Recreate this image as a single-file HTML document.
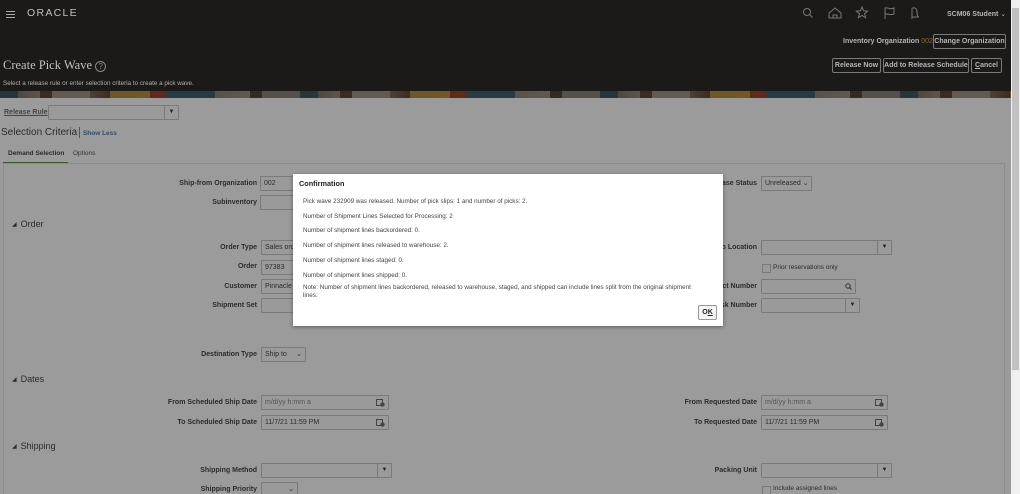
<!DOCTYPE html>
<html><head><meta charset="utf-8"><style>
*{margin:0;padding:0;box-sizing:border-box}
html,body{width:1020px;height:494px;overflow:hidden}
body{background:#9b9b9b;font-family:"Liberation Sans",Arial,sans-serif;position:relative;color:#2b2b2b}
.a{position:absolute;white-space:nowrap}
#hdr{left:0;top:0;width:1011px;height:91px;background:#1b1a19}
#ban{left:0;top:91px;width:1011px;height:7px;background:repeating-linear-gradient(90deg,#26363d 0,#26363d 18px,#4d4740 18px,#5d564c 40px,#3e2a20 40px,#3e2a20 52px,#625b52 52px,#625b52 90px,#4d4134 90px,#3e2a20 110px,#6e5628 110px,#715724 150px,#5e2a1a 150px,#5e2a1a 165px,#273b44 165px,#273b44 215px,#58524a 215px,#5f5950 250px,#352a20 250px,#352a20 262px,#55504a 262px,#55504a 300px)}
#sb{left:1011px;top:0;width:9px;height:494px;background:#f0f0f0}
#sbt{left:1012px;top:8px;width:7px;height:362px;background:#c1c1c1}
.w{color:#b5b5b5;font-size:7px;font-weight:bold}
.btn{position:absolute;border:1px solid #7a7a7a;border-radius:2px;color:#b5b5b5;font-size:7px;font-weight:bold;text-align:center;line-height:13px}
.lb{position:absolute;font-size:7px;font-weight:bold;color:#2b2b2b;text-align:right;white-space:nowrap}
.in{position:absolute;border:1px solid #7a7a7a;background:#9a9a9a;height:15px;font-size:7px;color:#2b2b2b;line-height:13px;padding-left:3px;border-radius:1px}
.dd{position:absolute;right:0;top:0;width:14px;height:13px;border-left:1px solid #7a7a7a;font-size:6px;text-align:center;line-height:13px;color:#222}
.sec{position:absolute;font-size:9px;color:#2b2b2b;left:12px}
.sec:before{content:"\25E2";font-size:6px;margin-right:4px;position:relative;top:-1px}
.cb{position:absolute;width:9px;height:9px;border:1px solid #7a7a7a}
#dlg{left:293px;top:174px;width:430px;height:152px;background:#fff;box-shadow:0 1px 4px rgba(0,0,0,.4)}
#dlg p{position:absolute;left:10px;font-size:6.3px;color:#444}
</style></head><body>
<div id="hdr" class="a"></div>
<div id="ban" class="a"></div>
<div id="sb" class="a"></div><div id="sbt" class="a"></div>
<svg class="a" style="left:6px;top:10px" width="9" height="8" stroke="#aaa" stroke-width="1"><path d="M0 1.5h9M0 4.5h9M0 7.5h9"/></svg>
<div class="a" style="left:27px;top:7px;color:#c0c0c0;font-size:10.5px;letter-spacing:1.3px">ORACLE</div>
<svg class="a" style="left:800px;top:6px" width="120" height="14" fill="none" stroke="#777" stroke-width="1">
<circle cx="7" cy="6" r="3.5"/><path d="M9.5 8.5l3 3"/>
<path d="M29 7l6-5 6 5v5h-12z M33 12v-3h4v3"/>
<path d="M62 1l1.6 3.8 4 .3-3 2.6 1 4-3.6-2.2-3.6 2.2 1-4-3-2.6 4-.3z"/>
<path d="M85 13V2c3-1 5 2 9 0v6c-4 2-6-1-9 0"/>
<path d="M112 13V3c0-2 5-2 5 3s2 5 2 5h-7"/>
</svg>
<div class="a w" style="left:947px;top:10px">SCM06 Student <span style="font-weight:normal">⌄</span></div>
<div class="a w" style="left:843px;top:38px">Inventory Organization <span style="color:#8a6a35;font-weight:normal">002</span></div>
<div class="btn" style="left:933px;top:34px;width:73px;height:15px">Change Organization</div>
<div class="btn" style="left:832px;top:58px;width:49px;height:15px">Release Now</div>
<div class="btn" style="left:883px;top:58px;width:86px;height:15px">Add to Release Schedule</div>
<div class="btn" style="left:971px;top:58px;width:31px;height:15px"><u>C</u>ancel</div>
<div class="a" style="left:3px;top:58px;color:#c0c0c0;font-size:12.5px;font-family:'Liberation Serif',serif">Create Pick Wave <span style="font-family:'Liberation Sans';color:#888;border:1px solid #888;border-radius:50%;display:inline-block;width:11px;height:11px;line-height:10px;text-align:center;font-size:8px">?</span></div>
<div class="a" style="left:3px;top:80px;color:#b0b0b0;font-size:6.3px">Select a release rule or enter selection criteria to create a pick wave.</div>
<div class="lb" style="left:4px;top:109px;text-decoration:underline;color:#444">Release Rule</div>
<div class="in" style="left:48px;top:105px;width:131px"><div class="dd">▼</div></div>
<div class="a" style="left:1px;top:127px;font-size:10px;color:#2b2b2b">Selection Criteria<span style="border-left:1px solid #555;margin-left:2px"></span> <span style="font-size:6.5px;color:#2b4f6e;font-weight:bold">Show Less</span></div>
<div class="a" style="left:8px;top:150px;font-size:6.5px;font-weight:bold">Demand Selection</div>
<div class="a" style="left:73px;top:150px;font-size:6.5px;color:#333">Options</div>
<div class="a" style="left:3px;top:162px;width:65px;height:2px;background:#3b5a2a"></div>
<div class="a" style="left:3px;top:163px;width:1002px;height:340px;border:1px solid #8c8c8c;border-bottom:none"></div>

<div class="lb" style="right:763px;top:180px">Ship-from Organization</div><div class="in" style="left:260px;top:176px;width:40px">002</div>
<div class="lb" style="right:763px;top:199px">Subinventory</div><div class="in" style="left:260px;top:195px;width:40px"></div>
<div class="sec" style="top:219px">Order</div>
<div class="lb" style="right:763px;top:244px">Order Type</div><div class="in" style="left:261px;top:240px;width:40px">Sales orde</div>
<div class="lb" style="right:763px;top:263px">Order</div><div class="in" style="left:261px;top:260px;width:40px">97383</div>
<div class="lb" style="right:763px;top:283px">Customer</div><div class="in" style="left:261px;top:279px;width:40px">Pinnacle</div>
<div class="lb" style="right:763px;top:302px">Shipment Set</div><div class="in" style="left:261px;top:298px;width:40px"></div>
<div class="lb" style="right:763px;top:351px">Destination Type</div><div class="in" style="left:261px;top:347px;width:45px">Ship to <span style="position:absolute;right:3px">⌄</span></div>
<div class="sec" style="top:374px">Dates</div>
<div class="lb" style="right:763px;top:399px">From Scheduled Ship Date</div><div class="in" style="left:261px;top:395px;width:128px;color:#555">m/d/yy h:mm a</div>
<div class="lb" style="right:763px;top:419px">To Scheduled Ship Date</div><div class="in" style="left:261px;top:415px;width:128px">11/7/21 11:59 PM</div>
<div class="sec" style="top:441px">Shipping</div>
<div class="lb" style="right:763px;top:467px">Shipping Method</div><div class="in" style="left:261px;top:463px;width:131px"><div class="dd">▼</div></div>
<div class="lb" style="right:763px;top:486px">Shipping Priority</div><div class="in" style="left:261px;top:482px;width:37px"><span style="position:absolute;right:3px">⌄</span></div>

<div class="lb" style="right:263px;top:180px">Release Status</div><div class="in" style="left:761px;top:176px;width:51px">Unreleased ⌄</div>
<div class="lb" style="right:263px;top:244px">Ship-to Location</div><div class="in" style="left:761px;top:240px;width:131px"><div class="dd">▼</div></div>
<div class="cb" style="left:762px;top:264px"></div><div class="a" style="left:773px;top:264px;font-size:6.5px">Prior reservations only</div>
<div class="lb" style="right:263px;top:283px">Project Number</div><div class="in" style="left:761px;top:279px;width:95px"><svg style="position:absolute;right:3px;top:3px" width="7" height="7" fill="none" stroke="#333"><circle cx="3" cy="3" r="2.2"/><path d="M4.6 4.6l2 2"/></svg></div>
<div class="lb" style="right:263px;top:302px">Task Number</div><div class="in" style="left:761px;top:298px;width:99px"><div class="dd">▼</div></div>
<div class="lb" style="right:263px;top:399px">From Requested Date</div><div class="in" style="left:761px;top:395px;width:127px;color:#555">m/d/yy h:mm a</div>
<div class="lb" style="right:263px;top:419px">To Requested Date</div><div class="in" style="left:761px;top:415px;width:127px">11/7/21 11:59 PM</div>
<div class="lb" style="right:263px;top:467px">Packing Unit</div><div class="in" style="left:761px;top:463px;width:131px"><div class="dd">▼</div></div>
<div class="cb" style="left:762px;top:486px"></div><div class="a" style="left:773px;top:485px;font-size:6.5px">Include assigned lines</div>
<svg class="a" style="left:376px;top:398px" width="9" height="9"><rect x="0.5" y="1.5" width="6" height="6" fill="none" stroke="#444"/><circle cx="6.5" cy="6.5" r="2.2" fill="#444"/></svg>
<svg class="a" style="left:376px;top:418px" width="9" height="9"><rect x="0.5" y="1.5" width="6" height="6" fill="none" stroke="#444"/><circle cx="6.5" cy="6.5" r="2.2" fill="#444"/></svg>
<svg class="a" style="left:875px;top:398px" width="9" height="9"><rect x="0.5" y="1.5" width="6" height="6" fill="none" stroke="#444"/><circle cx="6.5" cy="6.5" r="2.2" fill="#444"/></svg>
<svg class="a" style="left:875px;top:418px" width="9" height="9"><rect x="0.5" y="1.5" width="6" height="6" fill="none" stroke="#444"/><circle cx="6.5" cy="6.5" r="2.2" fill="#444"/></svg>

<div id="dlg" class="a">
<div class="a" style="left:6px;top:5px;font-size:7.3px;font-weight:bold;color:#222">Confirmation</div>
<p style="top:24px">Pick wave 232909 was released. Number of pick slips: 1 and number of picks: 2.</p>
<p style="top:39px">Number of Shipment Lines Selected for Processing: 2</p>
<p style="top:53px">Number of shipment lines backordered: 0.</p>
<p style="top:68px">Number of shipment lines released to warehouse: 2.</p>
<p style="top:83px">Number of shipment lines staged: 0.</p>
<p style="top:98px">Number of shipment lines shipped: 0.</p>
<p style="top:110px;white-space:normal;width:398px;line-height:7.5px">Note: Number of shipment lines backordered, released to warehouse, staged, and shipped can include lines split from the original shipment lines.</p>
<div class="a" style="left:405px;top:131px;width:19px;height:15px;border:1px solid #999;border-radius:2px;background:#f5f5f5;font-size:7px;font-weight:bold;text-align:center;line-height:13px;color:#222">O<u>K</u></div>
</div>
</body></html>
